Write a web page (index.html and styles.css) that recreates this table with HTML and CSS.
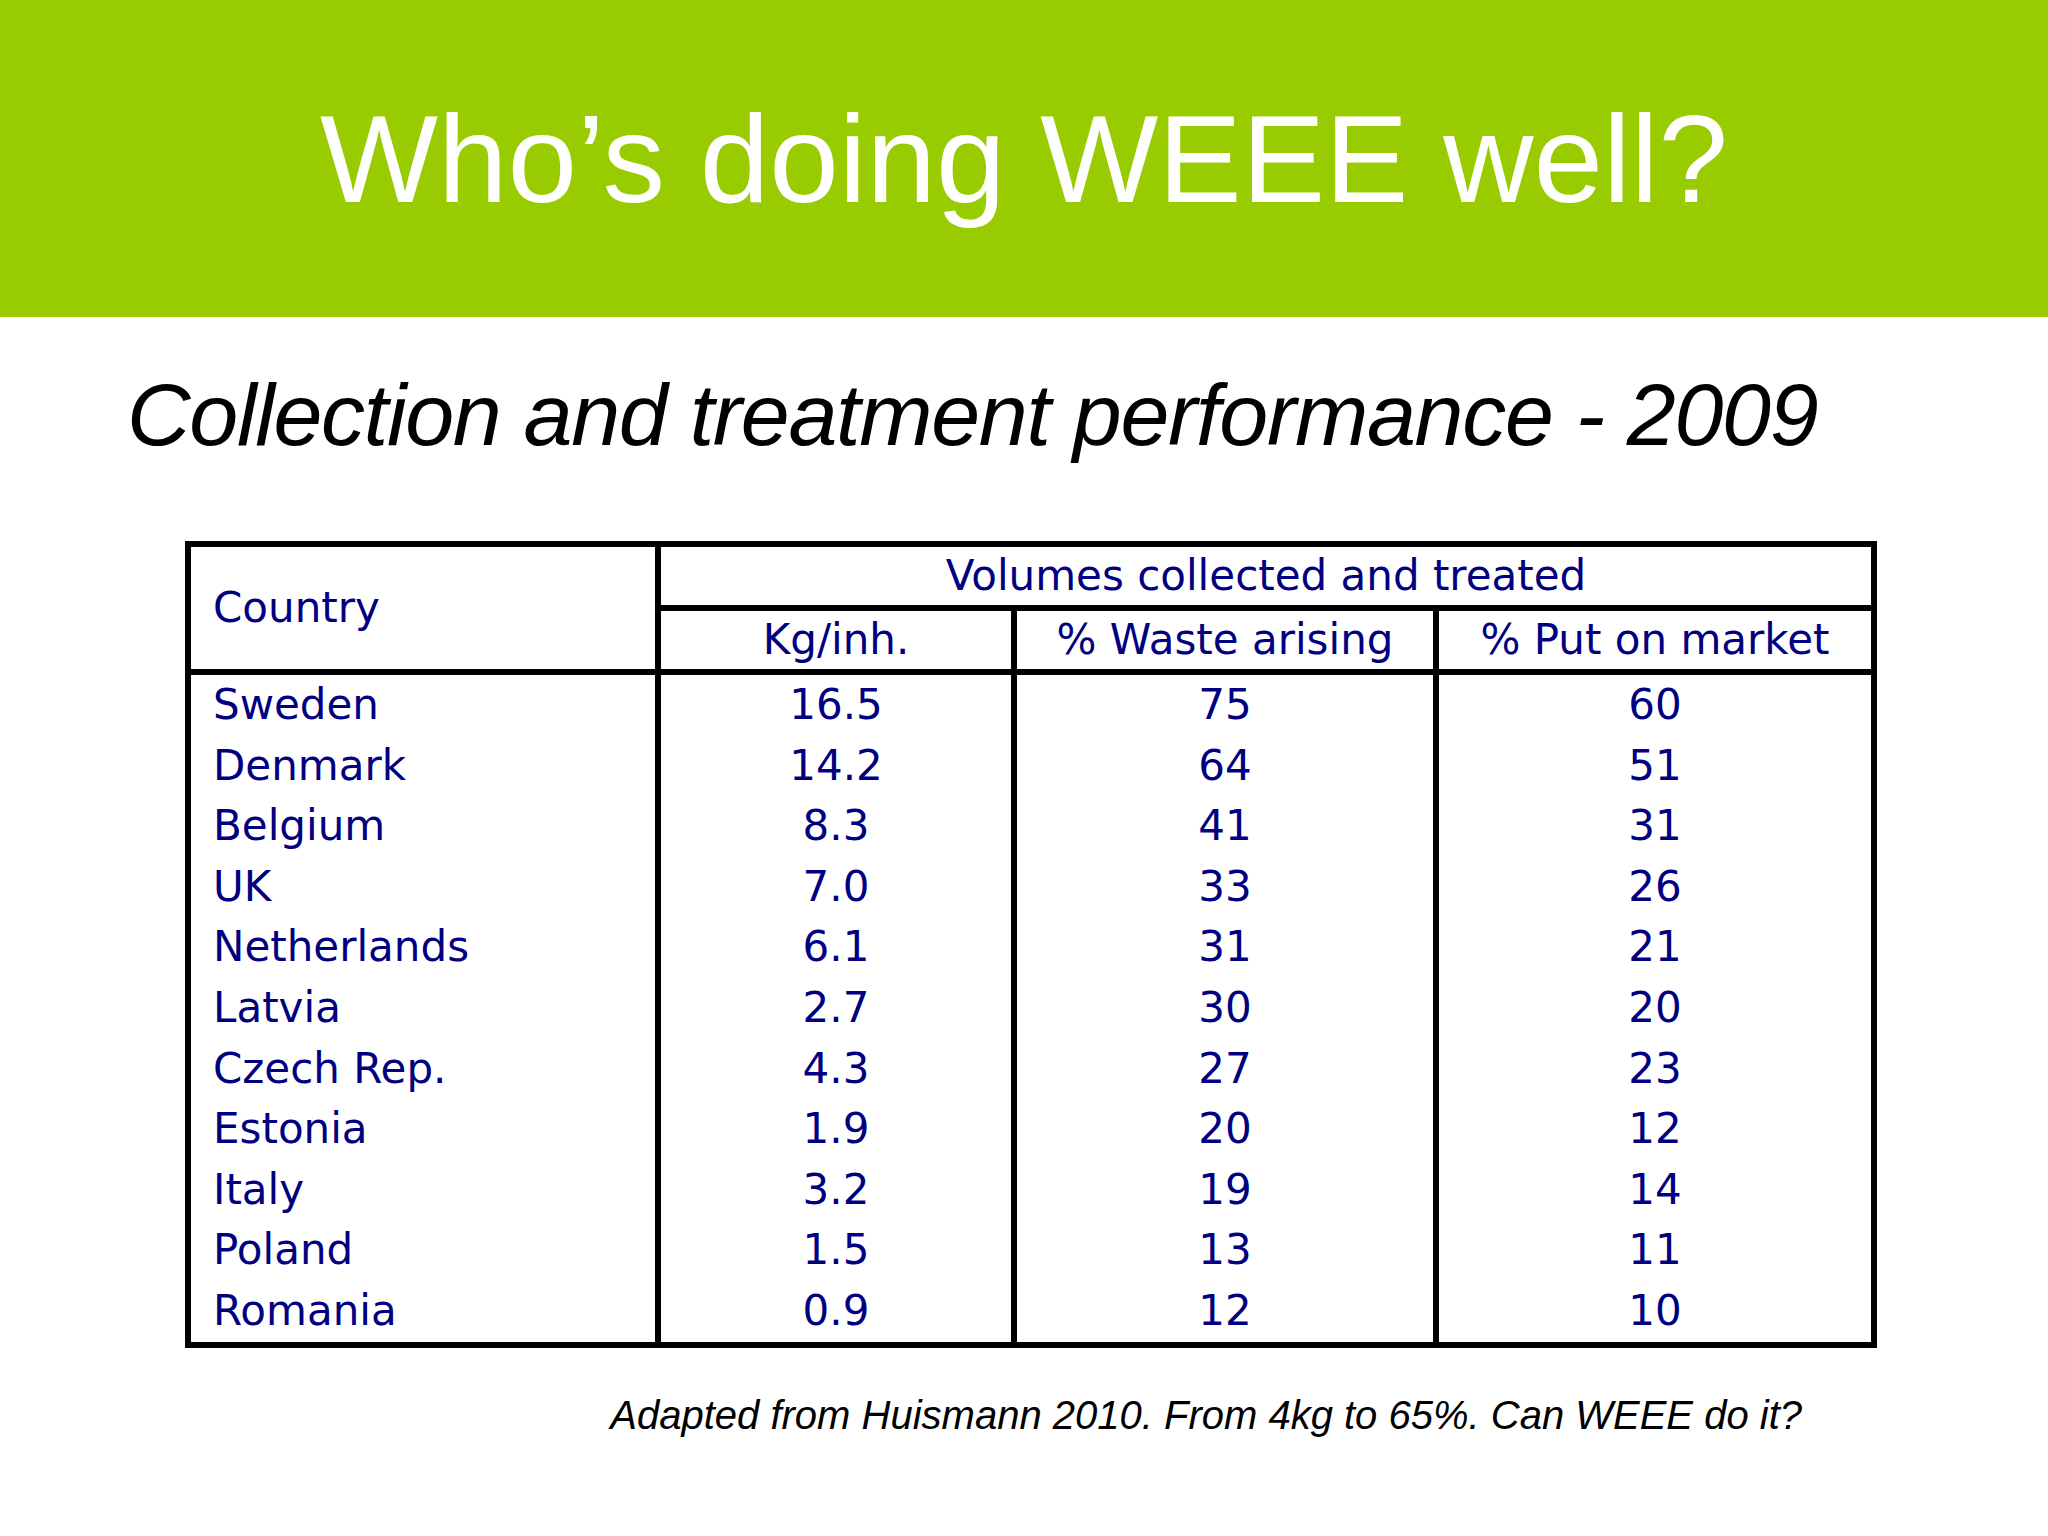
FILE: index.html
```html
<!DOCTYPE html>
<html lang="en">
<head>
<meta charset="utf-8">
<title>Who’s doing WEEE well?</title>
<link rel="stylesheet" href="styles.css">
</head>
<body>
<header class="banner">
  <h1 class="title">Who’s doing WEEE well?</h1>
</header>
<main class="content">
  <h2 class="subtitle">Collection and treatment performance - 2009</h2>
  <table class="data">
    <colgroup>
      <col class="c-country">
      <col class="c-kg">
      <col class="c-waste">
      <col class="c-market">
    </colgroup>
    <thead>
      <tr class="h1row">
        <th rowspan="2" class="country-head">Country</th>
        <th colspan="3">Volumes collected and treated</th>
      </tr>
      <tr class="h2row">
        <th>Kg/inh.</th>
        <th>% Waste arising</th>
        <th>% Put on market</th>
      </tr>
    </thead>
    <tbody>
      <tr><td>Sweden</td><td>16.5</td><td>75</td><td>60</td></tr>
      <tr><td>Denmark</td><td>14.2</td><td>64</td><td>51</td></tr>
      <tr><td>Belgium</td><td>8.3</td><td>41</td><td>31</td></tr>
      <tr><td>UK</td><td>7.0</td><td>33</td><td>26</td></tr>
      <tr><td>Netherlands</td><td>6.1</td><td>31</td><td>21</td></tr>
      <tr><td>Latvia</td><td>2.7</td><td>30</td><td>20</td></tr>
      <tr><td>Czech Rep.</td><td>4.3</td><td>27</td><td>23</td></tr>
      <tr><td>Estonia</td><td>1.9</td><td>20</td><td>12</td></tr>
      <tr><td>Italy</td><td>3.2</td><td>19</td><td>14</td></tr>
      <tr><td>Poland</td><td>1.5</td><td>13</td><td>11</td></tr>
      <tr><td>Romania</td><td>0.9</td><td>12</td><td>10</td></tr>
    </tbody>
  </table>
  <p class="source">Adapted from Huismann 2010. From 4kg to 65%. Can WEEE do it?</p>
</main>
</body>
</html>
```

FILE: styles.css
```css
html, body {
  margin: 0;
  padding: 0;
  background: #ffffff;
}

body {
  width: 2048px;
  height: 1536px;
  overflow: hidden;
  font-family: "Liberation Sans", Arial, sans-serif;
}

.banner {
  box-sizing: border-box;
  height: 317px;
  background: #99cc00;
  padding-top: 96px;
  display: flex;
  justify-content: center;
}

.title {
  margin: 0;
  font-family: "Liberation Sans", Arial, sans-serif;
  font-weight: normal;
  font-size: 125px;
  line-height: 125px;
  color: #ffffff;
  white-space: nowrap;
}

.content {
  display: flex;
  flex-direction: column;
}

.subtitle {
  margin: 54px 0 0 127px;
  font-family: "Liberation Sans", Arial, sans-serif;
  font-style: italic;
  font-weight: normal;
  font-size: 88px;
  line-height: 88px;
  letter-spacing: -1.3px;
  color: #000000;
  white-space: nowrap;
}

.data {
  margin: 82px 0 0 185px;
  border-collapse: collapse;
  table-layout: fixed;
  width: 1686px;
  border: 6px solid #000000;
  font-family: "DejaVu Sans", Verdana, sans-serif;
  font-size: 42px;
  color: #000080;
}

.c-country { width: 470px; }
.c-kg { width: 356px; }
.c-waste { width: 422px; }
.c-market { width: 438px; }

.data th,
.data td {
  padding: 0;
  font-weight: normal;
  text-align: center;
  white-space: nowrap;
}

.data thead th {
  border: 6px solid #000000;
}

.h1row th {
  height: 58px;
  line-height: 58px;
}

.h2row th {
  height: 54px;
  line-height: 58px;
}

.data th.country-head {
  text-align: left;
  padding-left: 22px;
}

.data tbody td {
  height: 60.6px;
  line-height: 60.6px;
  border-left: 6px solid #000000;
}

.data tbody td:first-child {
  text-align: left;
  padding-left: 22px;
}

.source {
  margin: 47px 246px 0 0;
  align-self: flex-end;
  font-family: "Liberation Sans", Arial, sans-serif;
  font-style: italic;
  font-size: 40px;
  line-height: 40px;
  color: #000000;
  white-space: nowrap;
}
```
